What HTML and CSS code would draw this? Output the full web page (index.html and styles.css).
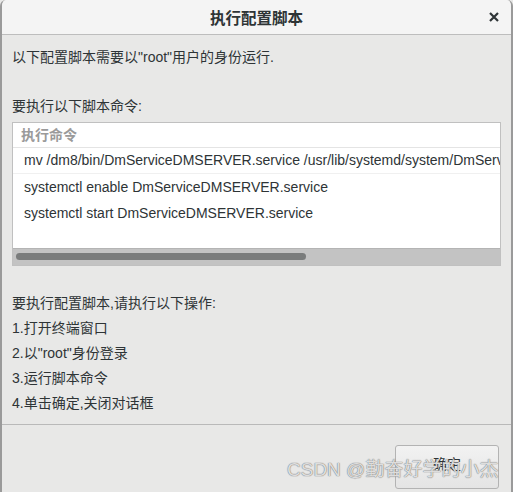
FILE: index.html
```html
<!DOCTYPE html>
<html lang="zh-CN">
<head>
  <meta charset="UTF-8" />
  <title>执行配置脚本</title>
  <link rel="stylesheet" href="styles.css">
</head>
<body>
  <div class="dialog">
    <div class="titlebar">
      <span class="title">执行配置脚本</span>
      <svg class="close" width="10" height="10" viewBox="0 0 10 10">
        <path d="M1 1 L9 9 M9 1 L1 9" stroke="#2e3436" stroke-width="2.2" />
      </svg>
    </div>
    <div class="content">
      <p class="intro">以下配置脚本需要以"root"用户的身份运行.</p>
      <p class="label">要执行以下脚本命令:</p>
      <div class="cmd-box">
        <div class="cmd-head">执行命令</div>
        <div class="cmd-rows">
          <div class="cmd-row first">mv /dm8/bin/DmServiceDMSERVER.service /usr/lib/systemd/system/DmServiceDMSERVER.service</div>
          <div class="cmd-row">systemctl enable DmServiceDMSERVER.service</div>
          <div class="cmd-row">systemctl start DmServiceDMSERVER.service</div>
        </div>
        <div class="hscroll"><div class="thumb"></div></div>
      </div>
      <div class="steps">
        <p>要执行配置脚本,请执行以下操作:</p>
        <p>1.打开终端窗口</p>
        <p>2.以"root"身份登录</p>
        <p>3.运行脚本命令</p>
        <p>4.单击确定,关闭对话框</p>
      </div>
    </div>
    <div class="footer">
      <button class="btn">确定</button>
    </div>
    <div class="watermark">CSDN @勤奋好学的小杰</div>
  </div>
</body>
</html>
```

FILE: styles.css
```css
* {
  box-sizing: border-box;
  margin: 0;
  padding: 0;
}

body {
  font-family: "Liberation Sans", "Noto Sans CJK SC", sans-serif;
  font-size: 14px;
  color: #2e3436;
  background: #e8e8e7;
  width: 513px;
  height: 492px;
  overflow: hidden;
}

.dialog {
  position: relative;
  width: 513px;
  height: 492px;
  background: #e8e8e7;
  border-left: 2px solid #9a9a9a;
  border-right: 2px solid #9a9a9a;
  border-radius: 6px 6px 0 0;
  overflow: hidden;
}

.titlebar {
  height: 35px;
  background: #f4f4f4;
  border-bottom: 1px solid #bdbdbd;
  display: flex;
  align-items: center;
  justify-content: center;
  position: relative;
}

.title {
  font-weight: bold;
  font-size: 15.5px;
  color: #2e3436;
}

.close {
  position: absolute;
  right: 12px;
  top: 12px;
}

.content {
  padding: 12px 10px 8px 10px;
  border-bottom: 1px solid #b9b9b9;
}

.intro,
.label {
  line-height: 20px;
}

.label {
  margin-top: 29px;
}

.cmd-box {
  margin-top: 6px;
  height: 144px;
  background: #fff;
  border: 1px solid #c0c0c0;
  display: flex;
  flex-direction: column;
  overflow: hidden;
}

.cmd-head {
  height: 25px;
  line-height: 24px;
  padding-left: 8px;
  font-weight: bold;
  color: #9a9a9a;
  border-bottom: 1px solid #e4e4e4;
}

.cmd-rows {
  flex: 1;
}

.cmd-row {
  height: 26px;
  line-height: 26px;
  padding-left: 11px;
  white-space: nowrap;
  overflow: hidden;
}

.cmd-row.first {
  border-bottom: 1px solid #f0f0f0;
  line-height: 25px;
}

.hscroll {
  height: 17px;
  background: #c3c3c3;
  border-top: 1px solid #b4b4b4;
  padding: 4px 0 0 3px;
}

.thumb {
  width: 290px;
  height: 7px;
  border-radius: 4px;
  background: #7a7c7c;
}

.steps {
  margin-top: 25px;
  line-height: 25px;
}

.footer {
  padding: 20px 12px 0 0;
  display: flex;
  justify-content: flex-end;
}

.btn {
  width: 104px;
  height: 44px;
  font-family: "Liberation Sans", "Noto Sans CJK SC", sans-serif;
  font-size: 14px;
  color: #2e3436;
  background: linear-gradient(#f2f2f2, #e4e4e4);
  border: 1px solid #b3b3b3;
  border-radius: 3px;
  padding-bottom: 8px;
}

.watermark {
  position: absolute;
  left: 285px;
  top: 454px;
  font-family: "Liberation Sans", "Noto Sans CJK SC", sans-serif;
  font-size: 19px;
  color: rgba(255, 255, 255, 0.75);
  text-shadow: 0 0 1px #777, 0 0 1px #777;
  white-space: nowrap;
}
```
